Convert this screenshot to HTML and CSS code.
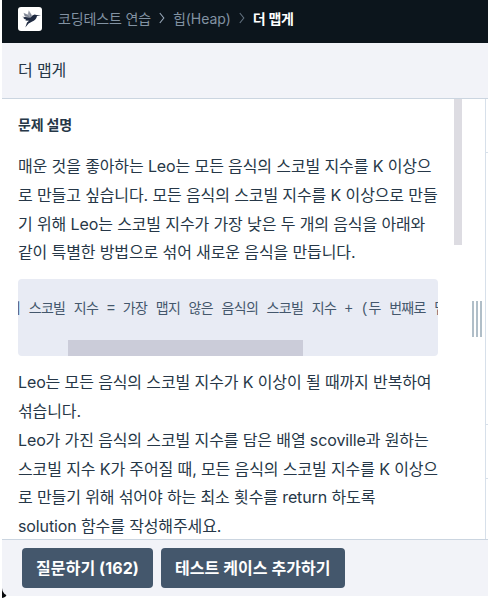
FILE: index.html
```html
<!DOCTYPE html>
<html lang="ko">
<head>
<meta charset="utf-8">
<title>더 맵게</title>
<link rel="stylesheet" href="styles.css">
</head>
<body>
<div class="window">
  <header class="topbar">
    <svg class="logo" viewBox="0 0 24 24">
      <rect width="24" height="24" rx="3" fill="#fff"/>
      <path d="M5.5 5.8L9.6 7.6L10.8 3.2L13.8 8L12.6 10.6L6.6 9.2Z" fill="#a3a7b1"/>
      <path d="M6.2 6.6L10.4 8.5L12 10.3L7 9.3ZM11.3 5.3L13.7 8.8L12 9.8Z" fill="#7d8493"/>
      <path d="M4.2 9.7L12.4 10.6Q14.4 7.6 16.6 7.4L18.5 7.9L23 8.2L19 8.9Q18.2 13 13.8 14.7L10.6 16.6L7.3 20.4L9 15.4L11 13.8L7.4 13.4L8 12.6L5.4 11.7L6.6 11.1Z" fill="#202b42"/>
    </svg>
    <nav class="crumbs">
      <span class="crumb c1">코딩테스트 연습</span>
      <svg class="chev" viewBox="0 0 6 12"><path d="M.8 1L4.8 6L.8 11"/></svg>
      <span class="crumb c2">힙(Heap)</span>
      <svg class="chev dim" viewBox="0 0 6 12"><path d="M.8 1L4.8 6L.8 11"/></svg>
      <span class="crumb current">더 맵게</span>
    </nav>
  </header>
  <div class="title">더 맵게</div>
  <main class="main">
    <section class="guide">
      <h6>문제 설명</h6>
      <p>매운 것을 좋아하는 Leo는 모든 음식의 스코빌 지수를 K 이상으<br>로 만들고 싶습니다. 모든 음식의 스코빌 지수를 K 이상으로 만들<br>기 위해 Leo는 스코빌 지수가 가장 낮은 두 개의 음식을 아래와<br>같이 특별한 방법으로 섞어 새로운 음식을 만듭니다.</p>
      <div class="codebox">
        <pre>의 스코빌 지수 = 가장 맵지 않은 음식의 스코빌 지수 + (두 번째로 맵</pre>
        <div class="hthumb"></div>
      </div>
      <p>Leo는 모든 음식의 스코빌 지수가 K 이상이 될 때까지 반복하여<br>섞습니다.<br>Leo가 가진 음식의 스코빌 지수를 담은 배열 scoville과 원하는<br>스코빌 지수 K가 주어질 때, 모든 음식의 스코빌 지수를 K 이상으<br>로 만들기 위해 섞어야 하는 최소 횟수를 return 하도록<br>solution 함수를 작성해주세요.</p>
    </section>
    <div class="scroll"><div class="vthumb"></div></div>
    <div class="gutter"><i></i><i></i><i></i></div>
    <aside class="side"><div class="s1"></div><div class="s2"></div><div class="s3"></div><div class="s4"></div></aside>
  </main>
  <div class="corner"></div>
  <footer class="footer">
    <button class="b1">질문하기 (162)</button>
    <button class="b2">테스트 케이스 추가하기</button>
  </footer>
</div>
</body>
</html>
```
FILE: styles.css
```css
* { box-sizing: border-box; }
body {
  margin: 0;
  background: #fff;
  color: #263747;
  font-family: Inter, "Noto Sans CJK KR", sans-serif;
  overflow: hidden;
}
.window {
  position: relative;
  height: 598px;
  padding-left: 2px;
  display: flex;
  flex-direction: column;
}
.topbar {
  height: 43px;
  flex: none;
  background: #0c151c;
  display: flex;
  align-items: flex-start;
  padding: 7px 0 0 16px;
}
.logo { width: 24px; height: 24px; flex: none; }
.crumbs {
  display: flex;
  align-items: center;
  height: 22px;
  margin-left: 16px;
  font-size: 14px;
  white-space: nowrap;
  color: #8292a2;
}
.chev {
  width: 6px;
  height: 12px;
  margin: 0 8px;
  fill: none;
  stroke: #98a8b9;
  stroke-width: 1.1;
}
.dim { stroke: #62717f; }
.crumb { letter-spacing: -0.15px; }
.c2 { letter-spacing: -0.05px; }
.current { color: #fff; font-weight: 700; letter-spacing: -0.3px; }
.title {
  height: 56px;
  flex: none;
  background: #f2f3f8;
  border-bottom: 1px solid #cbd5e0;
  padding-left: 16px;
  line-height: 54px;
  font-size: 16px;
  letter-spacing: -0.15px;
}
.main { height: 440px; flex: none; display: flex; overflow: hidden; }
.guide { width: 452px; flex: none; padding: 16px 16px 0; }
h6 {
  margin: 0;
  font-size: 14px;
  line-height: 20px;
  letter-spacing: -0.2px;
  font-weight: 700;
}
p {
  margin: 17px 0 0;
  font-size: 16px;
  line-height: 28.8px;
  letter-spacing: -0.12px;
  white-space: nowrap;
}
.codebox {
  width: 420px;
  height: 77px;
  margin-top: 12px;
  border-radius: 4px;
  background: #e8ebf4;
  overflow: hidden;
}
pre {
  height: 61px;
  margin: 0 0 0 -10px;
  font: 14px/61px "Liberation Mono", "Noto Sans CJK KR", monospace;
  letter-spacing: -0.66px;
  word-spacing: 0.7px;
  color: #44576c;
}
.hthumb { width: 235px; height: 16px; margin-left: 50px; background: #cbccd9; }
.codebox + p { margin-top: 12px; }
.scroll { width: 8px; }
.vthumb { height: 146px; background: #dddce2; }
.gutter {
  width: 23px;
  padding: 202px 0 0 10px;
  display: flex;
  gap: 2px;
}
.gutter i { width: 2px; height: 36px; background: #b0bec8; }
.side { width: 3px; border-left: 1px solid #d7e0ea; }
.side div { border-bottom: 1px solid #d7e0ea; }
.s1 { height: 54px; }
.s2 { height: 272px; }
.s3 { height: 54px; }
.side .s4 { border: 0; }
.footer {
  z-index: 1;
  height: 57px;
  flex: none;
  padding: 8px 0 0 20px;
  display: flex;
  gap: 8px;
  background: #f2f3f8;
  border-top: 1px solid #cbd5e0;
  border-bottom-left-radius: 8px;
}
.corner {
  position: absolute;
  left: 2px;
  bottom: 0;
  width: 5px;
  height: 10px;
  background: #090a0c;
  border-bottom-right-radius: 5px;
}
button {
  height: 40px;
  padding: 0;
  border: 0;
  border-radius: 4px;
  background: #44576c;
  color: #fff;
  font: 700 16px/24px Inter, "Noto Sans CJK KR", sans-serif;
  letter-spacing: 0.08px;
  white-space: nowrap;
}
.b1 { width: 131px; }
.b2 { width: 183.5px; }
```
